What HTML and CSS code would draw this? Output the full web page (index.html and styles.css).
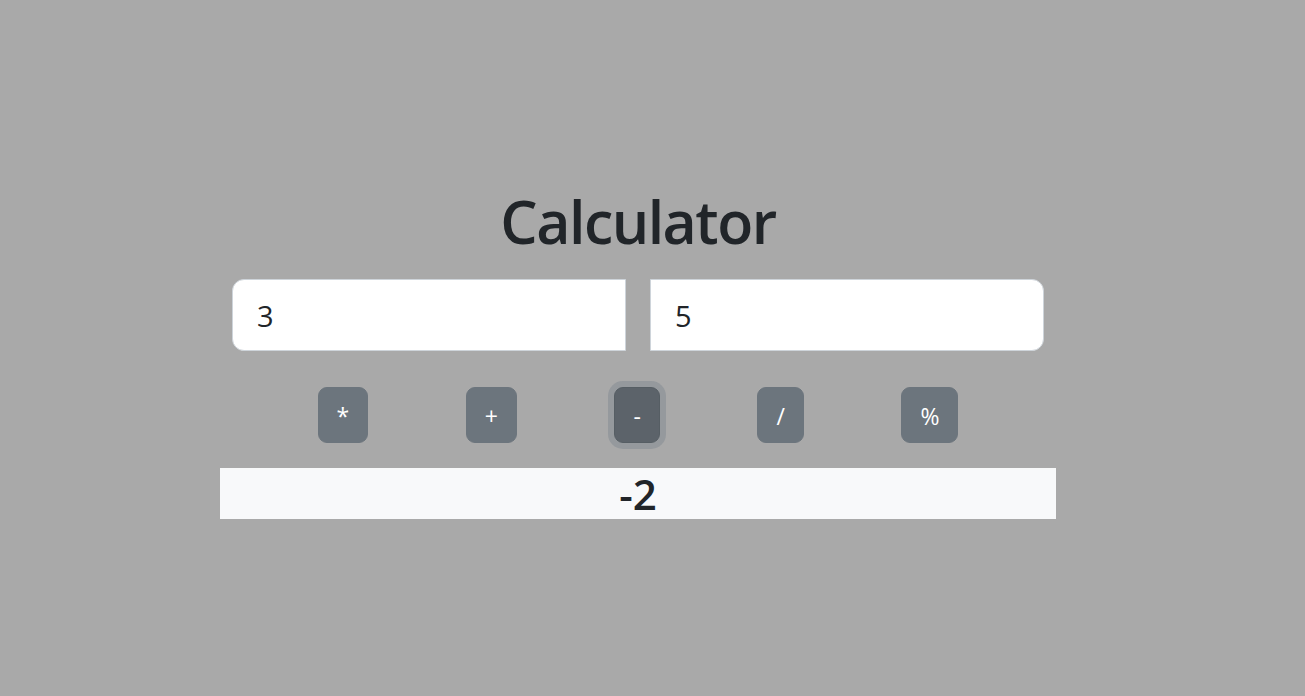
FILE: index.html
```html
<!DOCTYPE html>
<html lang="en">
<head>
<meta charset="utf-8">
<title>Calculator</title>
<link rel="stylesheet" href="styles.css">
</head>
<body>
<main class="calc">
  <h1 class="title">Calculator</h1>
  <div class="inputs">
    <input class="field field-left" type="text" value="3">
    <input class="field field-right" type="text" value="5">
  </div>
  <div class="ops">
    <button class="op" type="button">*</button>
    <button class="op" type="button">+</button>
    <button class="op op-active" type="button">-</button>
    <button class="op" type="button">/</button>
    <button class="op" type="button">%</button>
  </div>
  <h3 class="result">-2</h3>
</main>
</body>
</html>
```

FILE: styles.css
```css
* { box-sizing: border-box; }

html, body {
  margin: 0;
  padding: 0;
}

body {
  background: #a9a9a9;
  color: #212529;
  font-family: "Open Sans", "Noto Sans", "Liberation Sans", sans-serif;
  font-size: 24px;
  height: 696px;
  overflow: hidden;
}

.calc {
  width: 836px;
  margin-left: 220px;
  padding-top: 185px;
  display: flex;
  flex-direction: column;
}

.title {
  margin: 0 0 22px;
  font-size: 59px;
  font-weight: 600;
  line-height: 72px;
  text-align: center;
  color: #212529;
  letter-spacing: -1.5px;
}

.inputs {
  display: flex;
  gap: 24px;
  padding: 0 12px;
}

.field {
  flex: 1 1 0;
  min-width: 0;
  height: 72px;
  padding: 12px 24px;
  font-family: inherit;
  font-size: 29px;
  line-height: 45px;
  color: #212529;
  background: #fff;
  border: 1.5px solid #ced4da;
  outline: none;
}

.field-left {
  border-radius: 12px 0 0 12px;
}

.field-right {
  border-radius: 0 12px 12px 0;
}

.ops {
  display: flex;
  justify-content: space-evenly;
  margin-top: 36px;
}

.op {
  height: 56px;
  padding: 10px 18px 8px;
  font-family: inherit;
  font-size: 23px;
  line-height: 36px;
  color: #fff;
  background: #6c757d;
  border: 1.5px solid #6c757d;
  border-radius: 9px;
}

.op-active {
  background: #5c636a;
  border-color: #565e64;
  box-shadow: 0 0 0 6px rgba(130, 138, 145, 0.5);
}

.result {
  margin: 25px 0 0;
  height: 51px;
  background: #f8f9fa;
  font-size: 42px;
  font-weight: 600;
  line-height: 51px;
  text-align: center;
  color: #212529;
}
```
